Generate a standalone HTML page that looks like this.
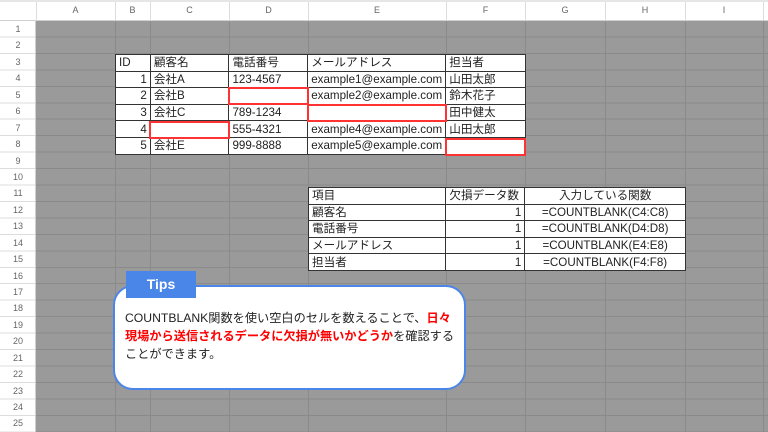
<!DOCTYPE html>
<html><head><meta charset="utf-8"><style>
*{margin:0;padding:0;box-sizing:border-box}
body{width:768px;height:432px;overflow:hidden;background:#9a9a9a;font-family:"Liberation Sans","Noto Sans CJK JP",sans-serif;position:relative}
.hdr{position:absolute;left:0;top:0;width:768px;height:21px;background:#fff;border-top:2px solid #e6e6e6;border-bottom:1px solid #cfcfcf}
.rn{position:absolute;left:0;top:21px;width:36px;height:411px;background:#fff;border-right:1px solid #cfcfcf;
background-image:repeating-linear-gradient(to bottom,transparent 0,transparent 15.45px,#dcdcdc 15.45px,#dcdcdc 16.45px)}
.grid{position:absolute;left:36px;top:21px;width:732px;height:411px;
background-image:repeating-linear-gradient(to bottom,transparent 0,transparent 15.45px,#8a8a8a 15.45px,#8a8a8a 16.45px)}
.v{position:absolute;top:21px;width:1px;height:411px;background:#8a8a8a}
.hv{position:absolute;top:2px;width:1px;height:19px;background:#dcdcdc}
.cl{position:absolute;top:5px;font-size:9px;color:#666;text-align:center}
.rl{position:absolute;left:0;width:36px;font-size:9px;color:#666;text-align:center}
table{position:absolute;border-collapse:collapse;background:#fff;font-size:11.6px;color:#222}
td{border:1px solid #333;height:16.6px;padding:1px 3px 0;white-space:nowrap;line-height:14px}
.r{text-align:right}.c{text-align:center}
.red{position:absolute;border:2px solid #f33}
</style></head><body>
<div class="hdr"></div>
<div class="grid"></div>
<div class="v" style="left:115px"></div><div class="v" style="left:150px"></div><div class="v" style="left:229px"></div><div class="v" style="left:308px"></div><div class="v" style="left:446px"></div><div class="v" style="left:525px"></div><div class="v" style="left:605px"></div><div class="v" style="left:685px"></div><div class="v" style="left:763px"></div>
<div class="hv" style="left:36px"></div><div class="hv" style="left:115px"></div><div class="hv" style="left:150px"></div><div class="hv" style="left:229px"></div><div class="hv" style="left:308px"></div><div class="hv" style="left:446px"></div><div class="hv" style="left:525px"></div><div class="hv" style="left:605px"></div><div class="hv" style="left:685px"></div><div class="hv" style="left:763px"></div>
<div class="cl" style="left:36px;width:79px">A</div><div class="cl" style="left:115px;width:35px">B</div><div class="cl" style="left:150px;width:79px">C</div><div class="cl" style="left:229px;width:79px">D</div><div class="cl" style="left:308px;width:138px">E</div><div class="cl" style="left:446px;width:79px">F</div><div class="cl" style="left:525px;width:80px">G</div><div class="cl" style="left:605px;width:80px">H</div><div class="cl" style="left:685px;width:78px">I</div>
<div class="rn"></div>
<div class="rl" style="top:24px">1</div><div class="rl" style="top:40px">2</div><div class="rl" style="top:57px">3</div><div class="rl" style="top:73px">4</div><div class="rl" style="top:90px">5</div><div class="rl" style="top:106px">6</div><div class="rl" style="top:123px">7</div><div class="rl" style="top:139px">8</div><div class="rl" style="top:156px">9</div><div class="rl" style="top:172px">10</div><div class="rl" style="top:188px">11</div><div class="rl" style="top:205px">12</div><div class="rl" style="top:221px">13</div><div class="rl" style="top:238px">14</div><div class="rl" style="top:254px">15</div><div class="rl" style="top:271px">16</div><div class="rl" style="top:287px">17</div><div class="rl" style="top:303px">18</div><div class="rl" style="top:320px">19</div><div class="rl" style="top:336px">20</div><div class="rl" style="top:353px">21</div><div class="rl" style="top:369px">22</div><div class="rl" style="top:386px">23</div><div class="rl" style="top:402px">24</div><div class="rl" style="top:418px">25</div>

<table style="left:115px;top:54px;width:411px">
<colgroup><col style="width:35px"><col style="width:79px"><col style="width:79px"><col style="width:138px"><col style="width:80px"></colgroup>
<tr><td>ID</td><td>顧客名</td><td>電話番号</td><td>メールアドレス</td><td>担当者</td></tr>
<tr><td class="r">1</td><td>会社A</td><td>123-4567</td><td>example1@example.com</td><td>山田太郎</td></tr>
<tr><td class="r">2</td><td>会社B</td><td></td><td>example2@example.com</td><td>鈴木花子</td></tr>
<tr><td class="r">3</td><td>会社C</td><td>789-1234</td><td></td><td>田中健太</td></tr>
<tr><td class="r">4</td><td></td><td>555-4321</td><td>example4@example.com</td><td>山田太郎</td></tr>
<tr><td class="r">5</td><td>会社E</td><td>999-8888</td><td>example5@example.com</td><td></td></tr>
</table>
<div class="red" style="left:228px;top:87px;width:81px;height:18px"></div>
<div class="red" style="left:307px;top:104px;width:140px;height:18px"></div>
<div class="red" style="left:149px;top:121px;width:81px;height:18px"></div>
<div class="red" style="left:445px;top:138px;width:81px;height:18px"></div>

<table style="left:308px;top:187px;width:378px">
<colgroup><col style="width:138px"><col style="width:79px"><col style="width:161px"></colgroup>
<tr><td>項目</td><td>欠損データ数</td><td class="c">入力している関数</td></tr>
<tr><td>顧客名</td><td class="r">1</td><td class="c">=COUNTBLANK(C4:C8)</td></tr>
<tr><td>電話番号</td><td class="r">1</td><td class="c">=COUNTBLANK(D4:D8)</td></tr>
<tr><td>メールアドレス</td><td class="r">1</td><td class="c">=COUNTBLANK(E4:E8)</td></tr>
<tr><td>担当者</td><td class="r">1</td><td class="c">=COUNTBLANK(F4:F8)</td></tr>
</table>

<div style="position:absolute;left:113px;top:285px;width:353px;height:105px;background:#fff;border:2px solid #4a86e8;border-radius:20px"></div>
<div style="position:absolute;left:126px;top:271px;width:70px;height:27px;background:#4a86e8;color:#fff;font-weight:bold;font-size:14px;text-align:center;line-height:27px">Tips</div>
<div style="position:absolute;left:125px;top:309px;width:335px;font-size:12.2px;line-height:18px;color:#222">COUNTBLANK関数を使い空白のセルを数えることで、<b style="color:#f00">日々現場から送信されるデータに欠損が無いかどうか</b>を確認することができます。</div>
</body></html>
